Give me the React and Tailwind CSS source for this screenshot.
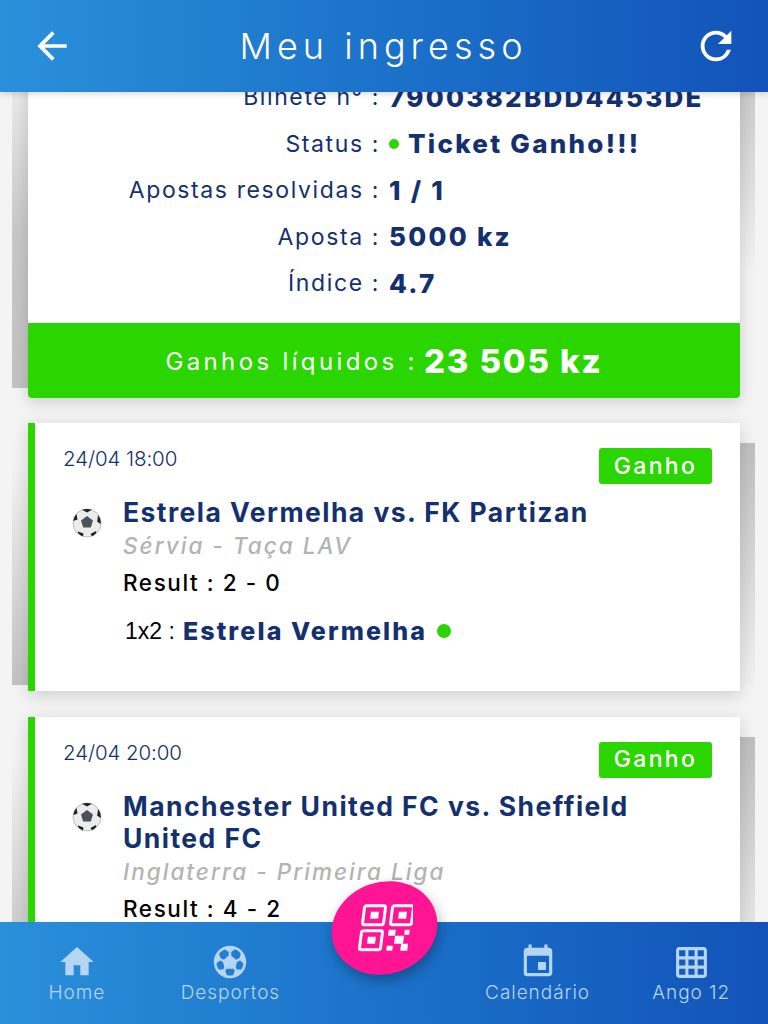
import React from 'react';
import { MdArrowBack, MdRefresh, MdHome, MdEvent, MdGridOn } from 'react-icons/md';
import { IoMdFootball } from 'react-icons/io';

const summaryRows = [
  { label: 'Bilhete n° :', value: '7900382BDD4453DE' },
  { label: 'Status :', value: 'Ticket Ganho!!!', dot: true },
  { label: 'Apostas resolvidas :', value: '1 / 1' },
  { label: 'Aposta :', value: '5000 kz' },
  { label: 'Índice :', value: '4.7' },
];

const navItems = [
  { label: 'Home', Icon: MdHome, size: 'w-[40px] h-[40px]' },
  { label: 'Desportos', Icon: IoMdFootball, size: 'w-[40px] h-[40px]' },
  null,
  { label: 'Calendário', Icon: MdEvent, size: 'w-[38px] h-[38px]' },
  { label: 'Ango 12', Icon: MdGridOn, size: 'w-[37px] h-[37px]' },
];

const SoccerBall = () => (
  <svg viewBox="0 0 30 30" className="w-[30px] h-[30px] shrink-0">
    <circle cx="15" cy="15" r="14" fill="#ececec" stroke="#9a9a9a" strokeWidth="0.6" />
    <path d="M15 8l6 4.5-2.2 7h-7.600L9 12.500z" fill="#4a525a" />
    <path d="M10 1.800c3-1.200 7-1.200 10 0l-5 2.600zM26 7c2 2.400 3 5.400 2.800 9l-3.600-2.200zM1.400 13C1.600 10.500 2.700 8 4.500 6l1 5.500zM6 23.500l5.500 2-.5 2.800c-2-.7-3.700-2-5-3.600zM24 23l-5.500 3 1.500 2.300c1.800-.8 3.200-2 4.300-3.500z" fill="#1d2329" />
  </svg>
);

const QrIcon = () => (
  <svg viewBox="0 0 56 48" className="w-[56px] h-[48px]" fill="none">
    <g transform="skewX(-7) translate(5 0)">
      <rect x="3" y="2" width="21" height="19" rx="2" stroke="#fff" strokeWidth="3" />
      <rect x="10" y="8" width="8" height="7" fill="#fff" />
      <rect x="31" y="2" width="21" height="19" rx="2" stroke="#fff" strokeWidth="3" />
      <rect x="38" y="8" width="8" height="7" fill="#fff" />
      <rect x="3" y="27" width="21" height="19" rx="2" stroke="#fff" strokeWidth="3" />
      <rect x="10" y="33" width="8" height="7" fill="#fff" />
      <rect x="30" y="26" width="7" height="6" fill="#fff" />
      <rect x="46" y="26" width="5" height="5" fill="#fff" />
      <rect x="37" y="32" width="9" height="8" fill="#fff" />
      <rect x="30" y="42" width="6" height="5" fill="#fff" />
      <rect x="44" y="40" width="7" height="7" fill="#fff" />
    </g>
  </svg>
);

const Strip = ({ className }) => <div className={`absolute w-[16px] ${className}`} />;

const BetCard = ({ date, title, league, result, pick }) => (
  <div className="relative">
    <Strip className="-left-[16px] top-[40px] bottom-[6px] bg-gradient-to-b from-[#f4f4f4] to-[#c2c2c2]" />
    <Strip className="-right-[15px] top-[20px] bottom-[6px] bg-gradient-to-b from-[#bfbfbf] to-[#f2f2f2]" />
    <div className="relative bg-white border-l-[7px] border-[#2bd600] pl-[28px] pr-[28px] pt-[25px] shadow-[0_4px_16px_rgba(0,0,0,0.16)] h-[268px]">
      <div className="flex items-start justify-between">
        <span className="text-[20.5px] font-light text-[#14306e] leading-[24px] -mt-px tracking-[-0.005em]">{date}</span>
        <span className="w-[113px] h-[36px] rounded-[3px] bg-[#2bd600] text-white text-[23px] font-medium tracking-[0.1em] flex items-center justify-center">Ganho</span>
      </div>
      <div className="flex items-start mt-[12px]">
        <div className="w-[60px] pl-[9px] pt-[12px]">
          <SoccerBall />
        </div>
        <div className="flex-1">
          <div className="text-[26.5px] font-bold text-[#14306e] leading-[32px] tracking-[0.055em]">{title}</div>
          <div className="text-[22.5px] font-medium italic text-[#b3b3b3] leading-[32px] mt-[2px] tracking-[0.09em]">{league}</div>
          <div className="text-[22.5px] font-medium text-black leading-[32px] mt-[5px] tracking-[0.07em]">{result}</div>
          {pick && (
            <div className="flex items-center text-[23px] text-black leading-[32px] mt-[16px] ml-[2px]">
              <span className="font-['Liberation_Sans',sans-serif] mr-[8px]">1x2 :</span>
              <span className="text-[25px] font-extrabold text-[#14306e] tracking-[0.085em]">{pick}</span>
              <span className="w-[14px] h-[14px] rounded-full bg-[#2bd600] ml-[10px]" />
            </div>
          )}
        </div>
      </div>
    </div>
  </div>
);

export default function App() {
  return (
    <div className="relative h-screen flex flex-col overflow-hidden bg-[#f4f4f4] font-['Inter',sans-serif]">
      <header className="relative z-10 h-[92px] shrink-0 flex items-center justify-between px-[30px] bg-gradient-to-r from-[#2a90da] to-[#1353b9] text-white shadow-[0_2px_6px_rgba(0,0,0,0.15)]">
        <MdArrowBack className="w-[44px] h-[44px]" />
        <h1 className="text-[36px] font-light tracking-[0.14em]">Meu ingresso</h1>
        <MdRefresh className="w-[46px] h-[46px] -mr-[1px]" />
      </header>

      <main className="flex-1 overflow-hidden px-[28px]">
        <div className="flex flex-col gap-[25.5px] -mt-[18px]">
          <div className="relative">
            <Strip className="-left-[16px] top-0 h-[calc(100%-10px)] bg-gradient-to-b from-[#eeeeee] via-[#c8c8c8] to-[#c2c2c2]" />
            <Strip className="-right-[15px] top-0 h-[60%] bg-gradient-to-b from-[#c8c8c8] to-[#f2f2f2]" />
            <div className="relative bg-white rounded-b-[4px] shadow-[0_4px_16px_rgba(0,0,0,0.16)] overflow-hidden">
              <div className="pb-[16px]">
                {summaryRows.map((row) => (
                  <div key={row.label} className="grid grid-cols-[352px_1fr] gap-x-[9px] h-[46.5px] items-center">
                    <span className="text-right text-[23px] text-[#14306e] tracking-[0.07em]">{row.label}</span>
                    <span className="flex items-center text-[26px] font-extrabold text-[#14306e] tracking-[0.087em]">
                      {row.dot && <span className="w-[10px] h-[10px] rounded-full bg-[#2bd600] mr-[9px]" />}
                      {row.value}
                    </span>
                  </div>
                ))}
              </div>
              <div className="h-[75px] pt-[4px] bg-[#2bd600] flex items-center justify-center text-white">
                <span className="text-[24px] font-normal tracking-[0.14em] mr-[6px]">Ganhos líquidos :</span>
                <span className="text-[33px] font-extrabold tracking-[0.057em]">23 505 kz</span>
              </div>
            </div>
          </div>

          <BetCard
            date="24/04 18:00"
            title="Estrela Vermelha vs. FK Partizan"
            league="Sérvia - Taça LAV"
            result="Result : 2 - 0"
            pick="Estrela Vermelha"
          />

          <BetCard
            date="24/04 20:00"
            title="Manchester United FC vs. Sheffield United FC"
            league="Inglaterra - Primeira Liga"
            result="Result : 4 - 2"
          />
        </div>
      </main>

      <footer className="relative z-10 h-[102px] shrink-0 grid grid-cols-5 bg-gradient-to-r from-[#2a90da] to-[#1353b9]">
        {navItems.map((item, i) =>
          item ? (
            <div key={item.label} className="flex flex-col items-center pt-[20px] text-[#b5d5f2]">
              <div className="h-[40px] flex items-center justify-center">
                <item.Icon className={item.size} />
              </div>
              <span className="text-[19px] font-light tracking-[0.05em] -mt-px leading-[24px]">{item.label}</span>
            </div>
          ) : (
            <div key={i} />
          )
        )}
        <div className="absolute left-[331px] -top-[40px] w-[107px] h-[92px] rounded-[50%] -rotate-[18deg] bg-[#ff1493] shadow-[0_6px_14px_rgba(0,0,0,0.3)] flex items-center justify-center">
          <div className="rotate-[18deg]">
            <QrIcon />
          </div>
        </div>
      </footer>
    </div>
  );
}
